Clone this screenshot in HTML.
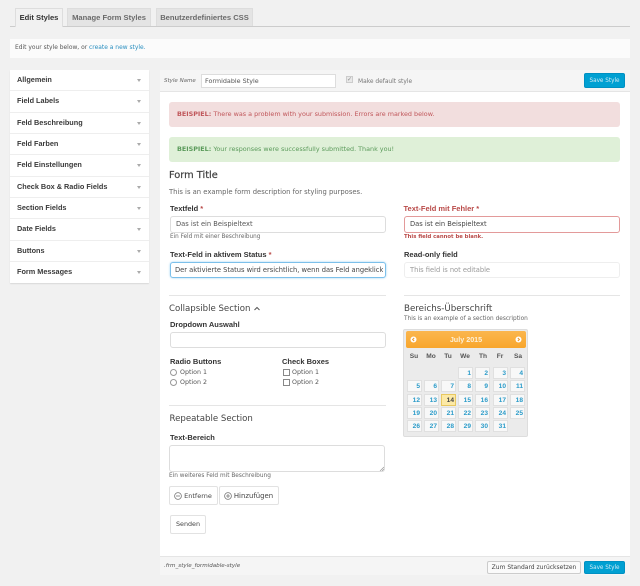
<!DOCTYPE html>
<html><head><meta charset="utf-8">
<style>
html,body{margin:0;padding:0}
body{width:640px;height:586px;background:#f1f1f1;position:relative;overflow:hidden;font-family:"DejaVu Sans","Liberation Sans",sans-serif;font-size:6.7px;color:#444}
.b{position:absolute;box-sizing:border-box}
.t{position:absolute;white-space:nowrap;line-height:12px}
.lb{font-family:"Liberation Sans",sans-serif;font-weight:bold;color:#333;font-size:7.5px}
.in{position:absolute;box-sizing:border-box;background:#fff;border:1px solid #ddd;border-radius:3px}
.tab{position:absolute;box-sizing:border-box;top:8px;height:18px;background:#e4e4e4;border:1px solid #ddd;border-bottom:0;font-family:"Liberation Sans",sans-serif;font-weight:bold;font-size:7.6px;color:#6a6a6a;line-height:17px;text-align:center;white-space:nowrap}
.it{position:absolute;left:10px;width:139px;height:21.3px;box-sizing:border-box;background:#fff;border-bottom:1px solid #eee;font-family:"Liberation Sans",sans-serif;font-weight:bold;font-size:7.3px;color:#3a3a3a;line-height:20px;padding-left:7px;white-space:nowrap}
.it:after{content:"";position:absolute;right:8px;top:9px;border:2.5px solid transparent;border-top:3px solid #aaa;border-bottom:0}
.d{position:absolute;width:15px;height:12px;box-sizing:border-box;background:#f8f8f8;border:1px solid #e0e0e0;color:#2a9bc9;font-family:"Liberation Sans",sans-serif;font-weight:bold;font-size:6.6px;line-height:11px;text-align:right;padding-right:1px}
.w{position:absolute;width:16px;text-align:center;font-family:"Liberation Sans",sans-serif;font-weight:bold;font-size:6.6px;color:#555;line-height:10px}
.btn{position:absolute;box-sizing:border-box;background:#fff;border:1px solid #e2e2e2;border-radius:2px;text-align:center;white-space:nowrap;color:#444}
.blue{position:absolute;box-sizing:border-box;background:#00a0d2;border:1px solid #0090c2;border-radius:2px;color:#cfeaf5;text-align:center;font-size:5.7px;white-space:nowrap}
</style></head>
<body>
<div class="b" style="left:10px;top:26px;width:620px;height:1px;background:#ccc"></div>
<div class="tab" style="left:15px;width:48px;height:19px;background:#f1f1f1;color:#333">Edit Styles</div>
<div class="tab" style="left:67px;width:84px">Manage Form Styles</div>
<div class="tab" style="left:156px;width:97px">Benutzerdefiniertes CSS</div>

<div class="b" style="left:10px;top:39px;width:620px;height:19px;background:#fbfbfb"></div>
<div class="t" style="left:15px;top:42px;font-size:5.95px;color:#555">Edit your style below, or <span style="color:#2a8fc0">create a new style.</span></div>

<div class="b" style="left:10px;top:70px;width:139px;height:213px;background:#fff;box-shadow:0 1px 1px rgba(0,0,0,.1)"></div>
<div class="it" style="top:70px">Allgemein</div>
<div class="it" style="top:91.3px">Field Labels</div>
<div class="it" style="top:112.6px">Feld Beschreibung</div>
<div class="it" style="top:134px">Feld Farben</div>
<div class="it" style="top:155.3px">Feld Einstellungen</div>
<div class="it" style="top:176.6px">Check Box &amp; Radio Fields</div>
<div class="it" style="top:198px">Section Fields</div>
<div class="it" style="top:219.3px">Date Fields</div>
<div class="it" style="top:240.6px">Buttons</div>
<div class="it" style="top:262px;border-bottom:0">Form Messages</div>

<div class="b" style="left:160px;top:70px;width:470px;height:505px;background:#fff"></div>
<div class="b" style="left:160px;top:70px;width:470px;height:22px;background:#f5f5f5;border-bottom:1px solid #e5e5e5"></div>
<div class="t" style="left:164px;top:75px;font-size:5.5px;font-style:italic;color:#666">Style Name</div>
<div class="in" style="left:201px;top:74px;width:135px;height:14px;border-radius:0"></div>
<div class="t" style="left:205px;top:75px;font-size:6.4px;color:#555">Formidable Style</div>
<div class="b" style="left:346px;top:76px;width:7px;height:7px;background:#e8e8e8;border:1px solid #ccc;color:#888;font-size:6px;line-height:5px">✓</div>
<div class="t" style="left:358px;top:75.5px;font-size:5.9px;color:#777">Make default style</div>
<div class="blue" style="left:584px;top:73px;width:41px;height:15px;line-height:15px">Save Style</div>

<div class="b" style="left:169px;top:102px;width:451px;height:25px;background:#f2dede;border-radius:3px"></div>
<div class="t" style="left:177px;top:108px;font-size:6.4px;color:#c0565a"><b>BEISPIEL:</b> There was a problem with your submission. Errors are marked below.</div>
<div class="b" style="left:169px;top:137px;width:451px;height:25px;background:#dff0d8;border-radius:3px"></div>
<div class="t" style="left:177px;top:143px;font-size:6.4px;color:#5a9a5a"><b>BEISPIEL:</b> Your responses were successfully submitted. Thank you!</div>

<div class="t" style="left:169px;top:170px;font-size:9.8px;color:#3f3f3f;-webkit-text-stroke:.2px #3f3f3f">Form Title</div>
<div class="t" style="left:169px;top:186px;font-size:6.8px;color:#666">This is an example form description for styling purposes.</div>

<div class="t lb" style="left:170px;top:203px">Textfeld <span style="color:#b94a48">*</span></div>
<div class="in" style="left:170px;top:216px;width:216px;height:17px"></div>
<div class="t" style="left:176px;top:218px;color:#555">Das ist ein Beispieltext</div>
<div class="t" style="left:170px;top:231px;font-size:5.7px;color:#666">Ein Feld mit einer Beschreibung</div>

<div class="t lb" style="left:403.500px;top:203px;color:#b94a48">Text-Feld mit Fehler *</div>
<div class="in" style="left:404px;top:216px;width:216px;height:17px;border-color:#e39a9a"></div>
<div class="t" style="left:410px;top:218px;color:#444">Das ist ein Beispieltext</div>
<div class="t" style="left:404px;top:231px;font-size:5.3px;font-weight:bold;color:#b94a48">This field cannot be blank.</div>

<div class="t lb" style="left:170px;top:249px">Text-Feld in aktivem Status <span style="color:#b94a48">*</span></div>
<div class="in" style="left:170px;top:262px;width:216px;height:16px;border-color:#7cc0ea;box-shadow:0 0 2px #9fd2f2"></div>
<div class="b" style="left:175px;top:263px;width:208px;height:14px;overflow:hidden"><div class="t" style="left:0;top:1px;color:#444">Der aktivierte Status wird ersichtlich, wenn das Feld angeklickt wird</div></div>

<div class="t lb" style="left:404px;top:249px">Read-only field</div>
<div class="in" style="left:404px;top:262px;width:216px;height:16px;border-color:#eee"></div>
<div class="t" style="left:410px;top:264px;color:#999">This field is not editable</div>

<div class="b" style="left:169px;top:295px;width:217px;height:1px;background:#e5e5e5"></div>
<div class="b" style="left:404px;top:295px;width:216px;height:1px;background:#e5e5e5"></div>

<div class="t" style="left:169px;top:303px;font-size:8.6px;color:#444">Collapsible Section</div>
<svg class="b" style="left:253px;top:306px" width="8" height="5" viewBox="0 0 8 5"><path d="M1.500 4L4 1.500 6.500 4" fill="none" stroke="#555" stroke-width="1"/></svg>
<div class="t lb" style="left:170px;top:319px">Dropdown Auswahl</div>
<div class="in" style="left:170px;top:332px;width:216px;height:16px"></div>

<div class="t lb" style="left:170px;top:356px">Radio Buttons</div>
<div class="b" style="left:170px;top:369px;width:7px;height:7px;border:1px solid #999;border-radius:50%;background:#fff"></div>
<div class="t" style="left:180px;top:367px;font-size:6.3px;color:#555">Option 1</div>
<div class="b" style="left:170px;top:378.500px;width:7px;height:7px;border:1px solid #999;border-radius:50%;background:#fff"></div>
<div class="t" style="left:180px;top:377px;font-size:6.3px;color:#555">Option 2</div>

<div class="t lb" style="left:282px;top:356px">Check Boxes</div>
<div class="b" style="left:283px;top:369px;width:7px;height:7px;border:1px solid #888;background:#fff"></div>
<div class="t" style="left:292px;top:367px;font-size:6.3px;color:#555">Option 1</div>
<div class="b" style="left:283px;top:378.500px;width:7px;height:7px;border:1px solid #888;background:#fff"></div>
<div class="t" style="left:292px;top:377px;font-size:6.3px;color:#555">Option 2</div>

<div class="b" style="left:169px;top:405px;width:217px;height:1px;background:#e5e5e5"></div>
<div class="t" style="left:169.500px;top:413px;font-size:8.6px;color:#444">Repeatable Section</div>
<div class="t lb" style="left:170px;top:432px">Text-Bereich</div>
<div class="in" style="left:169px;top:445px;width:216px;height:27px"></div>
<svg class="b" style="left:379px;top:466px" width="5" height="5" viewBox="0 0 5 5"><path d="M1 5L5 1M3 5L5 3" stroke="#999" stroke-width=".7"/></svg>
<div class="t" style="left:169px;top:470px;font-size:5.8px;color:#666">Ein weiteres Feld mit Beschreibung</div>

<div class="btn" style="left:169px;top:486px;width:49px;height:19px;line-height:18px;font-size:6.500px;padding-left:9px">Entferne</div>
<svg class="b" style="left:174px;top:492px" width="8" height="8" viewBox="0 0 8 8"><circle cx="4" cy="4" r="3.400" fill="none" stroke="#777" stroke-width=".8"/><path d="M2 4h4" stroke="#777" stroke-width=".8"/></svg>
<div class="btn" style="left:219px;top:486px;width:60px;height:19px;line-height:18px;font-size:6.900px;padding-left:9px">Hinzufügen</div>
<svg class="b" style="left:224px;top:492px" width="8" height="8" viewBox="0 0 8 8"><circle cx="4" cy="4" r="3.400" fill="none" stroke="#777" stroke-width=".8"/><path d="M2 4h4M4 2v4" stroke="#777" stroke-width=".8"/></svg>
<div class="btn" style="left:170px;top:515px;width:36px;height:19px;line-height:17px;font-size:6.400px">Senden</div>

<div class="t" style="left:404px;top:302.500px;font-size:8.7px;color:#444">Bereichs-Überschrift</div>
<div class="t" style="left:404px;top:313px;font-size:5.800px;color:#666">This is an example of a section description</div>

<div class="b" style="left:403px;top:329px;width:125px;height:108px;background:#ebebeb;border:1px solid #ddd;border-radius:2px"></div>
<div class="b" style="left:406px;top:331px;width:120px;height:17px;background:linear-gradient(#fbb64e,#f8a62c);border-radius:2px"></div>
<div class="t" style="left:406px;top:333.500px;width:120px;text-align:center;color:#fdf0d8;font-family:'Liberation Sans',sans-serif;font-weight:bold;font-size:7.200px">July 2015</div>
<svg class="b" style="left:410px;top:336px" width="7" height="7" viewBox="0 0 7 7"><circle cx="3.500" cy="3.500" r="3" fill="#fff"/><path d="M4.200 2L2.600 3.500 4.200 5" fill="none" stroke="#e8952a" stroke-width="1"/></svg>
<svg class="b" style="left:515px;top:336px" width="7" height="7" viewBox="0 0 7 7"><circle cx="3.500" cy="3.500" r="3" fill="#fff"/><path d="M2.800 2L4.400 3.500 2.800 5" fill="none" stroke="#e8952a" stroke-width="1"/></svg>

<div class="w" style="left:406px;top:352px">Su</div>
<div class="w" style="left:423px;top:352px">Mo</div>
<div class="w" style="left:440px;top:352px">Tu</div>
<div class="w" style="left:457px;top:352px">We</div>
<div class="w" style="left:475px;top:352px">Th</div>
<div class="w" style="left:492px;top:352px">Fr</div>
<div class="w" style="left:510px;top:352px">Sa</div>

<div class="d" style="left:458px;top:367px">1</div><div class="d" style="left:475px;top:367px">2</div><div class="d" style="left:493px;top:367px">3</div><div class="d" style="left:510px;top:367px">4</div>

<div class="d" style="left:407px;top:380px">5</div><div class="d" style="left:424px;top:380px">6</div><div class="d" style="left:441px;top:380px">7</div><div class="d" style="left:458px;top:380px">8</div><div class="d" style="left:475px;top:380px">9</div><div class="d" style="left:493px;top:380px">10</div><div class="d" style="left:510px;top:380px">11</div>

<div class="d" style="left:407px;top:394px">12</div><div class="d" style="left:424px;top:394px">13</div><div class="d" style="left:441px;top:394px;background:#fce9a6;border-color:#e8c860;color:#444">14</div><div class="d" style="left:458px;top:394px">15</div><div class="d" style="left:475px;top:394px">16</div><div class="d" style="left:493px;top:394px">17</div><div class="d" style="left:510px;top:394px">18</div>

<div class="d" style="left:407px;top:407px">19</div><div class="d" style="left:424px;top:407px">20</div><div class="d" style="left:441px;top:407px">21</div><div class="d" style="left:458px;top:407px">22</div><div class="d" style="left:475px;top:407px">23</div><div class="d" style="left:493px;top:407px">24</div><div class="d" style="left:510px;top:407px">25</div>

<div class="d" style="left:407px;top:420px">26</div><div class="d" style="left:424px;top:420px">27</div><div class="d" style="left:441px;top:420px">28</div><div class="d" style="left:458px;top:420px">29</div><div class="d" style="left:475px;top:420px">30</div><div class="d" style="left:493px;top:420px">31</div>

<div class="b" style="left:160px;top:556px;width:470px;height:19px;background:#f5f5f5;border-top:1px solid #e5e5e5"></div>
<div class="t" style="left:164px;top:560px;font-size:5.6px;font-style:italic;color:#555">.frm_style_formidable-style</div>
<div class="btn" style="left:487px;top:561px;width:94px;height:13px;line-height:12px;font-size:6px;background:#fafafa;border-color:#ccc">Zum Standard zurücksetzen</div>
<div class="blue" style="left:584px;top:561px;width:41px;height:13px;line-height:13px">Save Style</div>
</body></html>
